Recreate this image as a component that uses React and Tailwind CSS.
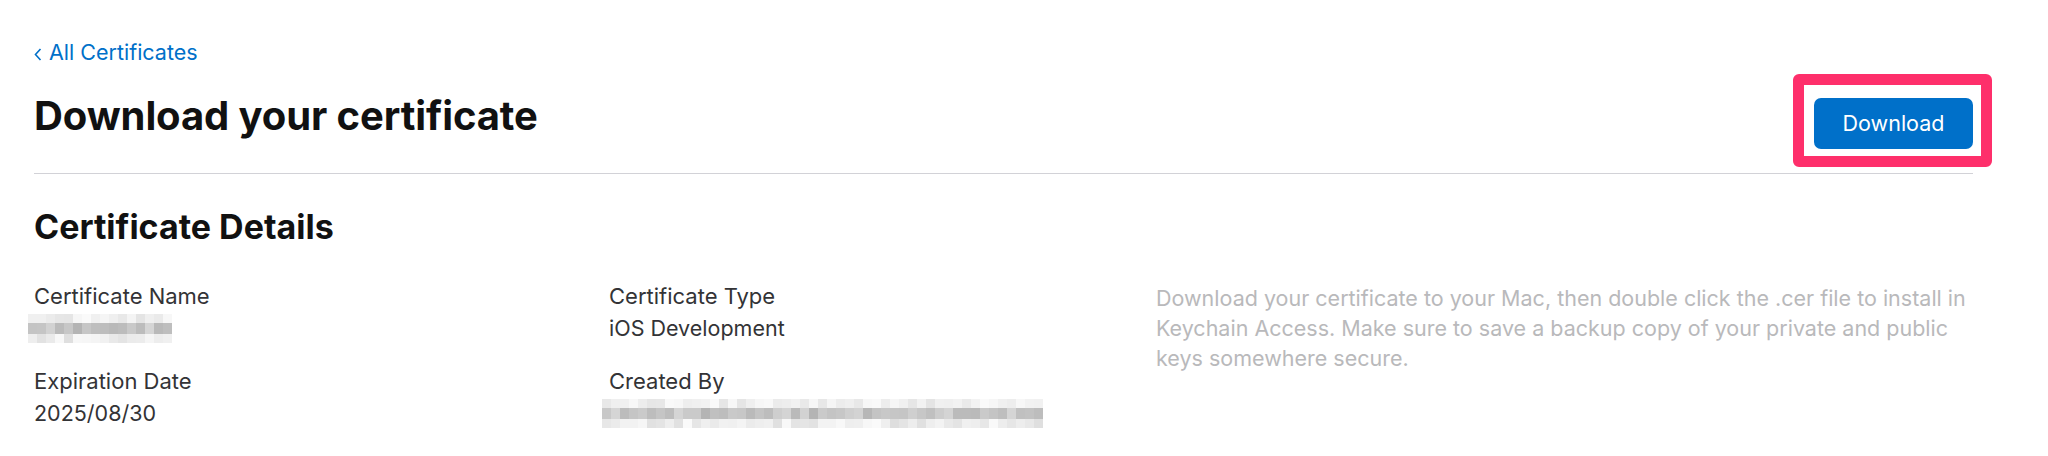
import React from 'react';

// deterministic grey levels for the pixelated (redacted) values
const shade = (seed, i, row) => {
  const n = Math.abs(Math.sin(seed * 12.9898 + i * 78.233 + row * 37.719) * 43758.5453) % 1;
  if (row === 1) return n > 0.4 ? 165 + Math.round(n * 35) : 195 + Math.round(n * 50);
  if (row === 0) return 228 + Math.round(n * 22);
  return 222 + Math.round(n * 28);
};

const Mosaic = ({ cols, seed, className }) => {
  const cell = 9;
  const rows = [9, 11, 9];
  let y = 0;
  return (
    <svg className={className} width={cols * cell} height={29} viewBox={`0 0 ${cols * cell} 29`}>
      {rows.map((h, r) => {
        const top = y;
        y += h;
        return Array.from({ length: cols }).map((_, i) => {
          const g = shade(seed, i, r);
          return (
            <rect key={`${r}-${i}`} x={i * cell} y={top} width={cell} height={h} fill={`rgb(${g},${g},${g})`} />
          );
        });
      })}
    </svg>
  );
};

const Field = ({ label, children, className = '' }) => (
  <div className={className}>
    <div className="text-[22px] leading-[32px] text-[#333336]">{label}</div>
    <div className="text-[21.5px] leading-[32px] text-[#333336] h-[32px] flex items-center">{children}</div>
  </div>
);

export default function App() {
  return (
    <div className="w-[2048px] h-[456px] bg-white overflow-hidden font-['Inter','Liberation_Sans',sans-serif]">
      <div className="pl-[34px] pr-[75px] pt-[40px]">
        {/* Back link */}
        <a className="flex items-center gap-[7px] text-[21.5px] leading-[24px] text-[#0070c9]">
          <svg width="8" height="14" viewBox="0 0 8 14" className="mt-[3px]">
            <polyline points="6.5,2 1.5,7.5 6.5,13" fill="none" stroke="#0070c9" strokeWidth="1.6" />
          </svg>
          <span>All Certificates</span>
        </a>

        {/* Header row */}
        <div className="mt-[28px] flex justify-between items-start pb-[24px] border-b border-[#d2d2d7]">
          <h1 className="text-[40px] leading-[48px] font-bold text-[#111111] tracking-[-0.1px]">
            Download your certificate
          </h1>
          <div className="relative mt-[6px]">
            <button className="w-[159px] h-[51px] rounded-[7px] bg-[#0070c9] text-white text-[21.5px]">
              Download
            </button>
            <div className="absolute -left-[21px] -top-[24px] -right-[19px] -bottom-[18px] border-[11px] border-[#fe2f6b] rounded-[6px] pointer-events-none" />
          </div>
        </div>

        <h2 className="mt-[33px] text-[34px] leading-[40px] font-bold text-[#111111]">Certificate Details</h2>

        <div className="mt-[33px] grid grid-cols-[575px_547px_1fr]">
          <div className="flex flex-col gap-[21px]">
            <Field label="Certificate Name">
              <Mosaic cols={16} seed={3} className="-ml-[6px]" />
            </Field>
            <Field label="Expiration Date">2025/08/30</Field>
          </div>
          <div className="flex flex-col gap-[21px]">
            <Field label="Certificate Type">iOS Development</Field>
            <Field label="Created By">
              <Mosaic cols={49} seed={7} className="-ml-[7px]" />
            </Field>
          </div>
          <p className="mt-[3px] text-[21.5px] leading-[30px] text-[#b9b9bb]">
            Download your certificate to your Mac, then double click the .cer file to install in
            <br />
            Keychain Access. Make sure to save a backup copy of your private and public
            <br />
            keys somewhere secure.
          </p>
        </div>
      </div>
    </div>
  );
}
